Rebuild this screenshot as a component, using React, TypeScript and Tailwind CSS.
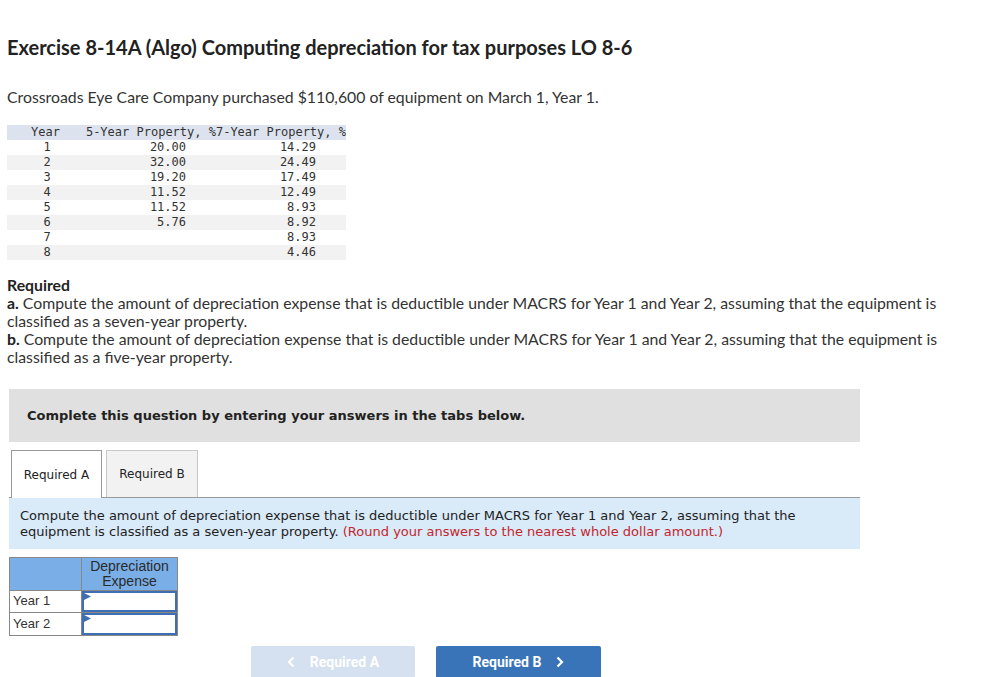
import React from "react";

const rows: [string, string, string][] = [
  ["1", "20.00", "14.29"],
  ["2", "32.00", "24.49"],
  ["3", "19.20", "17.49"],
  ["4", "11.52", "12.49"],
  ["5", "11.52", "8.93"],
  ["6", "5.76", "8.92"],
  ["7", "", "8.93"],
  ["8", "", "4.46"],
];

function InputCell() {
  return (
    <div className="relative h-full border-2 border-[#3e6fb4] bg-white">
      <svg className="absolute left-0 top-0" width="7" height="7" viewBox="0 0 7 7">
        <polygon points="0,0 7,3.5 0,7" fill="#3e6fb4" />
      </svg>
    </div>
  );
}

function Chevron({ dir }: { dir: "left" | "right" }) {
  return (
    <svg width="9" height="12" viewBox="0 0 9 12" className="inline-block">
      <polyline
        points={dir === "left" ? "6.5,1.5 2,6 6.5,10.5" : "2.5,1.5 7,6 2.5,10.5"}
        fill="none"
        stroke="white"
        strokeWidth="2.2"
      />
    </svg>
  );
}

export default function App() {
  return (
    <div className="w-[1006px] h-[677px] overflow-hidden bg-white text-[#333]">
      <div className="pl-[7px] pt-[35px]">
        <h1 className="font-['Lato',sans-serif] font-bold text-[20px] leading-[24px] text-[#222] whitespace-nowrap">
          Exercise 8-14A (Algo) Computing depreciation for tax purposes LO 8-6
        </h1>
        <p className="mt-[28px] font-['Lato',sans-serif] text-[15.8px] leading-[19px] text-[#333] whitespace-nowrap">
          Crossroads Eye Care Company purchased $110,600 of equipment on March 1, Year 1.
        </p>
        <div className="mt-[19px] w-[339px] font-['DejaVu_Sans_Mono',monospace] text-[12px] leading-[15px] text-[#333]">
          <div className="flex h-[15px] bg-[#dde3ee] whitespace-nowrap">
            <div className="w-[80px] text-center">Year</div>
            <div className="pl-[2px]">5-Year Property, %7-Year Property, %</div>
          </div>
          {rows.map((r, i) => (
            <div key={i} className={"flex h-[15px] " + (i % 2 === 1 ? "bg-[#f2f2f2]" : "bg-white")}>
              <div className="w-[80px] text-center">{r[0]}</div>
              <div className="w-[130px] pr-[31px] text-right">{r[1]}</div>
              <div className="w-[129px] pr-[30px] text-right">{r[2]}</div>
            </div>
          ))}
        </div>
        <div className="mt-[16px] font-['Lato',sans-serif] text-[15.8px] leading-[18px] text-[#333] whitespace-nowrap">
          <div className="font-bold text-[#222]">Required</div>
          <div>
            <b className="text-[#222]">a.</b> Compute the amount of depreciation expense that is deductible under MACRS for Year 1 and Year 2, assuming that the equipment is
            <br />
            classified as a seven-year property.
          </div>
          <div>
            <b className="text-[#222]">b.</b> Compute the amount of depreciation expense that is deductible under MACRS for Year 1 and Year 2, assuming that the equipment is
            <br />
            classified as a five-year property.
          </div>
        </div>
      </div>

      <div className="ml-[9px] mt-[23px] w-[851px]">
        <div className="flex h-[53px] items-center bg-[#e0e0e0] pl-[18px] font-['DejaVu_Sans',sans-serif] text-[13px] font-bold text-[#222]">
          Complete this question by entering your answers in the tabs below.
        </div>
        <div className="mt-[8px] flex h-[48px] items-end border-b border-[#999] pl-[2px] font-['DejaVu_Sans',sans-serif] text-[12px] text-[#222]">
          <div className="-mb-px flex h-[48px] w-[91px] items-center justify-center border border-b-0 border-[#999] bg-white">
            Required A
          </div>
          <div className="ml-[4px] flex h-[47px] w-[92px] items-center justify-center border border-b-0 border-[#c8c8c8] bg-[#f2f2f2]">
            Required B
          </div>
        </div>
        <div className="h-[51px] bg-[#d9eaf8] pl-[11px] pt-[10px] font-['DejaVu_Sans',sans-serif] text-[13px] leading-[16px] text-[#222] whitespace-nowrap">
          Compute the amount of depreciation expense that is deductible under MACRS for Year 1 and Year 2, assuming that the
          <br />
          equipment is classified as a seven-year property. <span className="text-[#c4262e]">(Round your answers to the nearest whole dollar amount.)</span>
        </div>

        <div className="mt-[8px] w-[169px] border border-[#888] font-['Liberation_Sans',sans-serif] text-[13px] text-[#333]">
          <div className="flex h-[32px] bg-[#7aaee6]">
            <div className="w-[72px] border-r border-[#888]"></div>
            <div className="flex-1 text-center text-[14px] leading-[15px] pt-px text-[#2a2a2a]">
              Depreciation
              <br />
              Expense
            </div>
          </div>
          <div className="flex h-[22px] border-t border-[#888]">
            <div className="w-[72px] border-r border-[#888] pl-[3px] leading-[20px]">Year 1</div>
            <div className="flex-1"><InputCell /></div>
          </div>
          <div className="flex h-[23px] border-t border-[#888]">
            <div className="w-[72px] border-r border-[#888] pl-[3px] leading-[21px]">Year 2</div>
            <div className="flex-1"><InputCell /></div>
          </div>
        </div>
      </div>

      <div className="mt-[10px] flex pl-[251px] font-['Roboto',sans-serif] text-[14px] font-bold text-white">
        <div className="flex h-[32px] w-[164px] items-center justify-center rounded-[2px] bg-[#d5e1f0]">
          <span className="mr-[14px] flex"><Chevron dir="left" /></span>Required A
        </div>
        <div className="ml-[21px] flex h-[32px] w-[165px] items-center justify-center rounded-[2px] bg-[#3a74b8]">
          Required B<span className="ml-[14px] flex"><Chevron dir="right" /></span>
        </div>
      </div>
    </div>
  );
}
